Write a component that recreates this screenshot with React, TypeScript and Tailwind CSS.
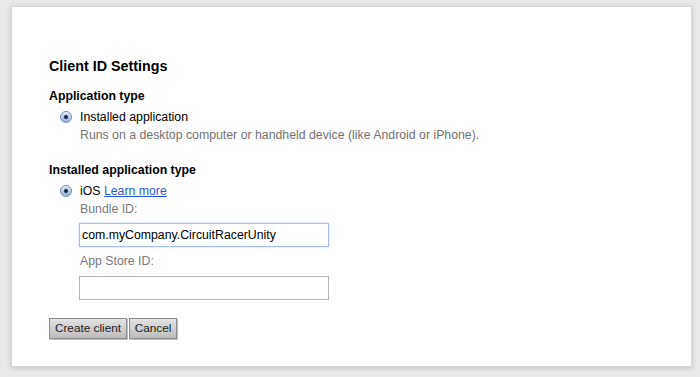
import * as React from "react"

function Radio() {
  return (
    <span className="flex h-[12px] w-[12px] shrink-0 items-center justify-center rounded-full border border-[#7b8ca8] bg-gradient-to-b from-[#cfe0f7] to-[#8fb4e6] shadow-[inset_0_1px_1px_rgba(255,255,255,0.7)]">
      <span className="h-[4px] w-[4px] rounded-full bg-[#1c2430]" />
    </span>
  )
}

export default function App() {
  return (
    <div className="h-[377px] w-[700px] bg-[#e9e9e9] pl-[11px] pt-[6px] font-['Liberation_Sans',Arial,sans-serif] text-[12.3px] text-[#222]">
      <div className="h-[361px] w-[681px] border border-[#d6d6d6] bg-white pl-[37px] pt-[50px] shadow-[0_1px_5px_rgba(0,0,0,0.18)]">
        <h2 className="text-[14.3px] leading-[18px] font-bold text-black">Client ID Settings</h2>

        <div className="mt-[12px] leading-[18px] font-bold text-black">Application type</div>
        <div className="mt-[3px] ml-[11px] flex items-center gap-[8px] leading-[18px] text-black">
          <Radio />
          <span>Installed application</span>
        </div>
        <div className="ml-[31px] leading-[18px] text-[#737373]">
          Runs on a desktop computer or handheld device (like Android or iPhone).
        </div>

        <div className="mt-[17px] leading-[18px] font-bold text-black">Installed application type</div>
        <div className="mt-[3px] ml-[11px] flex items-center gap-[8px] leading-[18px] text-black">
          <Radio />
          <span>
            iOS <a href="#" className="text-[#2a5bd7] underline">Learn more</a>
          </span>
        </div>

        <div className="ml-[30px]">
          <div className="pl-[1px] leading-[18px] text-[#7a7a7a]">Bundle ID:</div>
          <input
            readOnly
            value="com.myCompany.CircuitRacerUnity"
            className="mt-[5px] h-[24px] w-[250px] border border-[#a9bfe6] bg-white px-[2px] text-[12.3px] text-black shadow-[0_0_2px_rgba(90,140,220,0.45)] outline-none"
          />
          <div className="mt-[5px] pl-[1px] leading-[18px] text-[#7a7a7a]">App Store ID:</div>
          <input
            readOnly
            value=""
            className="mt-[6px] h-[24px] w-[250px] border border-[#b4b4b4] bg-white px-[2px] text-[12.3px] text-black outline-none"
          />
        </div>

        <div className="mt-[18px] flex gap-[2px]">
          <button className="h-[21px] w-[78px] border border-[#8c8c8c] bg-gradient-to-b from-[#e2e2e2] to-[#bdbdbd] text-[11.8px] leading-[19px] text-[#222] shadow-[1px_1px_0_rgba(0,0,0,0.25)]">
            Create client
          </button>
          <button className="h-[21px] w-[48px] border border-[#8c8c8c] bg-gradient-to-b from-[#e2e2e2] to-[#bdbdbd] text-[11.8px] leading-[19px] text-[#222] shadow-[1px_1px_0_rgba(0,0,0,0.25)]">
            Cancel
          </button>
        </div>
      </div>
    </div>
  )
}
